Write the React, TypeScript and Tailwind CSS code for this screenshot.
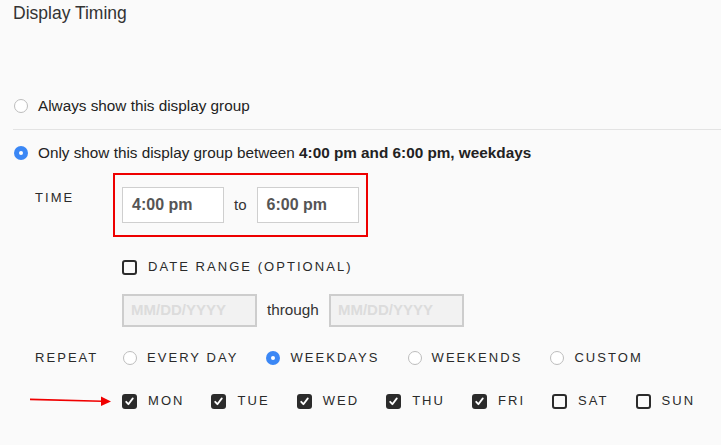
const font = { fontFamily: '"Liberation Sans", Arial, Helvetica, sans-serif' };

const Radio = ({ checked }: { checked?: boolean }) =>
  checked ? (
    <span className="flex h-[14px] w-[14px] shrink-0 items-center justify-center rounded-full bg-[#3b87f5]">
      <span className="h-[4px] w-[4px] rounded-full bg-white" />
    </span>
  ) : (
    <span className="h-[14px] w-[14px] shrink-0 rounded-full border border-[#bdbdbd] bg-white" />
  );

const Checkbox = ({ checked }: { checked?: boolean }) =>
  checked ? (
    <span className="flex h-[15px] w-[15px] shrink-0 items-center justify-center rounded-[3px] bg-[#2b2b2b]">
      <svg width="11" height="11" viewBox="0 0 11 11" fill="none">
        <path d="M2.2 5.8 L4.4 8.2 L8.8 2.4" stroke="white" strokeWidth="1.8" strokeLinecap="round" strokeLinejoin="round" />
      </svg>
    </span>
  ) : (
    <span className="h-[15px] w-[15px] shrink-0 rounded-[3px] border-2 border-[#2b2b2b]" />
  );

const repeatOptions = [
  { label: 'EVERY DAY', checked: false },
  { label: 'WEEKDAYS', checked: true },
  { label: 'WEEKENDS', checked: false },
  { label: 'CUSTOM', checked: false },
];

const days = [
  { label: 'MON', checked: true },
  { label: 'TUE', checked: true },
  { label: 'WED', checked: true },
  { label: 'THU', checked: true },
  { label: 'FRI', checked: true },
  { label: 'SAT', checked: false },
  { label: 'SUN', checked: false },
];

const caps = 'text-[13px] leading-[16px] tracking-[2.05px] text-[#2a2a2a]';

const App = () => {
  return (
    <div className="min-h-screen w-full overflow-hidden bg-[#fafafa] pl-[13px] text-[#222]" style={font}>
      <div className="pt-[2px] text-[17.5px] leading-[22px] text-[#333]">Display Timing</div>

      <div className="mt-[71px] flex h-[22px] items-center gap-[10px] pl-px text-[15.3px]">
        <Radio />
        <span>Always show this display group</span>
      </div>

      <div className="mt-[12px] h-px bg-[#e3e3e3]" />

      <div className="mt-[12px] flex h-[22px] items-center gap-[10px] pl-px text-[15.3px]">
        <Radio checked />
        <span>
          Only show this display group between <b>4:00 pm and 6:00 pm, weekdays</b>
        </span>
      </div>

      <div className="pl-[22px]">
        {/* time */}
        <div className="mt-[9px] flex">
          <div className={`w-[87px] pt-[17px] ${caps}`}>TIME</div>
          <div className="-ml-[9px] flex items-center gap-[10px] border-2 border-[#ee0000] px-[7px] py-[12px]">
            <div className="flex h-[36px] w-[102px] items-center border border-[#cfcfcf] bg-white pl-[9px] text-[16px] font-bold text-[#555]">
              4:00 pm
            </div>
            <span className="text-[15px] text-[#333]">to</span>
            <div className="flex h-[36px] w-[102px] items-center border border-[#cfcfcf] bg-white pl-[9px] text-[16px] font-bold text-[#555]">
              6:00 pm
            </div>
          </div>
        </div>

        {/* date range */}
        <div className="mt-[22px] flex h-[16px] items-center gap-[11px] pl-[87px]">
          <Checkbox />
          <span className={caps}>DATE RANGE (OPTIONAL)</span>
        </div>

        <div className="mt-[19px] flex items-center gap-[10px] pl-[87px]">
          <div className="flex h-[33px] w-[135px] items-center border-2 border-[#cdcdcd] bg-[#f2f2f2] pl-[7px] text-[15px] font-bold text-[#dcdcdc]">
            MM/DD/YYYY
          </div>
          <span className="text-[15.3px] text-[#333]">through</span>
          <div className="flex h-[33px] w-[135px] items-center border-2 border-[#cdcdcd] bg-[#f2f2f2] pl-[7px] text-[15px] font-bold text-[#dcdcdc]">
            MM/DD/YYYY
          </div>
        </div>

        {/* repeat */}
        <div className="mt-[23px] flex h-[16px] items-center">
          <div className={`w-[88px] ${caps}`}>REPEAT</div>
          <div className="flex items-center gap-[28px]">
            {repeatOptions.map((o) => (
              <div key={o.label} className="flex items-center gap-[10px]">
                <Radio checked={o.checked} />
                <span className={caps}>{o.label}</span>
              </div>
            ))}
          </div>
        </div>

        {/* days */}
        <div className="mt-[27px] flex h-[16px] items-center">
          <div className="w-[87px]">
            <svg className="-ml-[5px]" width="82" height="12" viewBox="0 0 82 12">
              <path d="M0 4.4 L72 6.3" stroke="#f00000" strokeWidth="1.6" />
              <path d="M71 1.6 L81 6.6 L71 11 Z" fill="#f00000" />
            </svg>
          </div>
          <div className="flex items-center gap-[27px]">
            {days.map((d) => (
              <div key={d.label} className="flex items-center gap-[11px]">
                <Checkbox checked={d.checked} />
                <span className={caps}>{d.label}</span>
              </div>
            ))}
          </div>
        </div>
      </div>
    </div>
  );
};

export default App;
